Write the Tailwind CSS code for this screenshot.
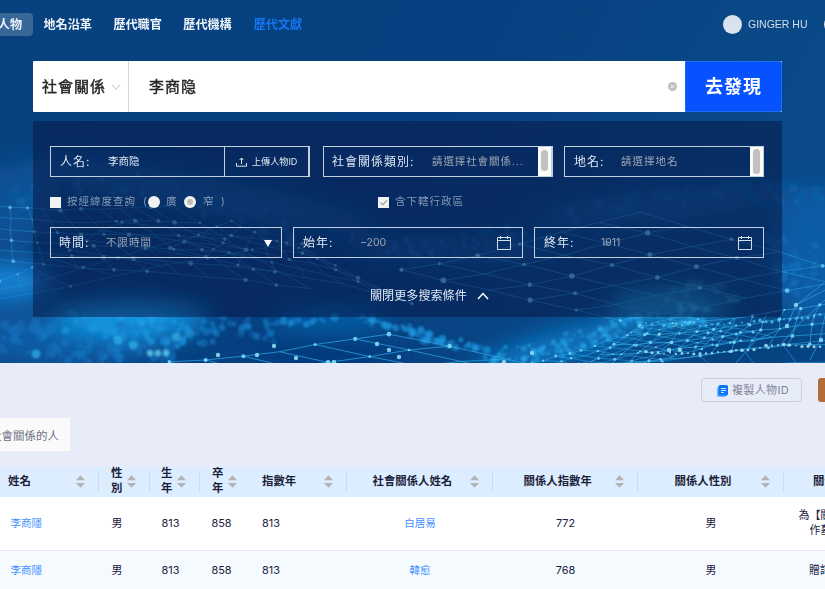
<!DOCTYPE html>
<html lang="zh-Hant">
<head>
    <meta charset="UTF-8">
    <meta name="viewport" content="width=device-width, initial-scale=1.0">
    <title>社會關係查詢</title>
    <script src="https://cdn.jsdelivr.net/npm/@tailwindcss/browser@4"></script>
    <style>
        body {
            font-family: 'Inter', 'Noto Sans CJK TC', 'Noto Sans CJK SC', sans-serif;
        }
    </style>
</head>
<body class="w-[825px] h-[589px] overflow-hidden bg-[#e8ecf8] text-[#22223f] whitespace-nowrap">

    <!-- Hero -->
    <section class="relative h-[363px] overflow-hidden bg-[#07427f]">
        <svg id="hero-bg" class="absolute inset-0" width="825" height="363" viewBox="0 0 825 363">
            <defs>
                <linearGradient id="base" x1="0" y1="0" x2="1" y2="0.25">
                    <stop offset="0" stop-color="#07427f"/>
                    <stop offset="0.55" stop-color="#074080"/>
                    <stop offset="1" stop-color="#0a4a88"/>
                </linearGradient>
                <filter id="soft" x="-50%" y="-50%" width="200%" height="200%"><feGaussianBlur stdDeviation="12"/></filter>
                <filter id="fine" x="-50%" y="-50%" width="200%" height="200%"><feGaussianBlur stdDeviation="0.9"/></filter>
            </defs>
            <rect width="825" height="363" fill="url(#base)"/>
            <g filter="url(#soft)">
                <ellipse cx="5" cy="282" rx="48" ry="20" fill="#1283d6"/>
                <ellipse cx="10" cy="205" rx="50" ry="40" fill="#0b559b" opacity="0.8"/>
                <ellipse cx="60" cy="340" rx="110" ry="26" fill="#0c62ae" opacity="0.8"/>
                <ellipse cx="130" cy="318" rx="80" ry="16" fill="#14a0ee"/>
                <ellipse cx="330" cy="318" rx="60" ry="7" fill="#1184d4" opacity="0.8"/>
                <ellipse cx="560" cy="345" rx="90" ry="12" transform="rotate(-16 560 345)" fill="#1080cf"/>
                <ellipse cx="670" cy="306" rx="60" ry="12" fill="#1da4e0"/>
                <ellipse cx="815" cy="255" rx="45" ry="70" fill="#0c5ca6"/>
                <ellipse cx="660" cy="205" rx="130" ry="16" transform="rotate(-6 660 205)" fill="#0d5fa6" opacity="0.7"/>
                <ellipse cx="200" cy="195" rx="180" ry="18" transform="rotate(10 200 195)" fill="#0d62a8" opacity="0.7"/>
                <ellipse cx="450" cy="250" rx="110" ry="14" fill="#0d62a8" opacity="0.6"/>
                <ellipse cx="330" cy="355" rx="70" ry="14" fill="#08387a" opacity="0.8"/>
                <ellipse cx="750" cy="350" rx="80" ry="10" fill="#073a78" opacity="0.9"/>
            </g>
            <g id="bokeh" filter="url(#fine)"></g>
            <g id="mesh" stroke="#2fa8e8" stroke-width="0.9" fill="none"></g>
            <g id="nodes"></g>
        </svg>

        <div class="relative">
            <nav class="flex items-center h-[61px] pb-3 text-[12.1px] font-bold text-[#eef4fb]">
                <span class="w-[33px] h-[23px] rounded-r bg-white/20 flex items-center justify-end pr-[11px] pt-[2px]">人物</span>
                <span class="ml-[10.500px] pt-[2px]">地名沿革</span>
                <span class="ml-[21.500px] pt-[2px]">歷代職官</span>
                <span class="ml-[21.500px] pt-[2px]">歷代機構</span>
                <span class="ml-[22px] pt-[2px] text-[#1677f2]">歷代文獻</span>
                <span class="ml-auto w-[19px] h-[19px] rounded-full bg-[#dae2ed]"></span>
                <span class="ml-[6px] font-['Liberation_Sans'] font-normal text-[10.5px] w-[59px] text-[#d3dfec]">GINGER HU</span>
                <span class="ml-[17px] -mr-[18px] w-[19px] h-[19px] rounded-full bg-[#dae2ed]"></span>
            </nav>

            <!-- Search bar -->
            <div class="flex ml-[33px] w-[749px] h-[51px] bg-white rounded-[1px] text-[#252525]">
                <div class="w-[96px] border-r border-[#d9d9d9] flex items-center pl-[9px] pt-px text-[15px] tracking-[1px] [-webkit-text-stroke:0.4px_#252525]">
                    社會關係
                    <svg class="ml-[5px]" width="10" height="8" viewBox="0 0 10 8" fill="none" stroke="#c4c4c4"><path d="M1 1.500 5 6.500 9 1.500"/></svg>
                </div>
                <div class="flex-1 flex items-center pl-5 pr-2 pt-px text-[15px] tracking-[1px] [-webkit-text-stroke:0.4px_#252525]">
                    李商隐
                    <svg class="ml-auto -mt-px" width="9" height="9" viewBox="0 0 9 9"><circle cx="4.500" cy="4.500" r="4.500" fill="#bfbfbf"/><path d="M3 3l3 3M6 3 3 6" stroke="#fff"/></svg>
                </div>
                <button class="w-[97px] bg-[#0652ff] border border-[#1a6cf0] rounded-r-[2px] text-white text-[18px] font-bold tracking-[1px]">去發現</button>
            </div>

            <!-- Advanced conditions -->
            <div class="ml-[33px] mt-[9px] w-[749px] h-[196px] bg-[#061442]/50 pt-[25px] px-[17px] text-[12px] text-[#dfe7f1]">
                <div class="flex h-[31px]">
                    <div class="w-[260px] border border-[#c5d0de] border-r-2 flex items-center pl-[9px]">
                        <span class="w-[48px] tracking-[1px]">人名:</span>
                        <span class="text-[10.5px] pt-px">李商隐</span>
                        <span class="ml-auto h-full w-[84px] border-l border-[#c5d0de] flex items-center pl-[11px] text-[9.1px]">
                            <svg class="mr-[5px]" width="11" height="10" viewBox="0 0 11 10" fill="none" stroke="#dfe7f1"><path d="M.5 6v3.200h10V6M5.500 7V1.200M3.600 3 5.500 1l1.900 2"/></svg>
                            上傳人物ID
                        </span>
                    </div>
                    <div class="ml-[13px] w-[230px] border border-[#c5d0de] border-r-2 flex items-center pl-[8px]">
                        <span class="w-[100px] tracking-[1px]">社會關係類別:</span>
                        <span class="text-[10.5px] tracking-[0.9px] text-[#9fa6b3]">請選擇社會關係...</span>
                        <span class="ml-auto w-[13px] h-full bg-[#fafafa] pt-[3px] pl-[3px]"><i class="block w-[7px] h-[21px] rounded-full bg-[#c1c1c1]"></i></span>
                    </div>
                    <div class="ml-[11px] w-[200px] border border-[#c5d0de] flex items-center pl-[9px]">
                        <span class="w-[47px] tracking-[1px]">地名:</span>
                        <span class="text-[10.5px] tracking-[1px] text-[#9fa6b3] pt-px">請選擇地名</span>
                        <span class="ml-auto w-[13px] h-full bg-[#fafafa] pt-[2px] pl-[3px]"><i class="block w-[7px] h-[25px] rounded-full bg-[#c1c1c1]"></i></span>
                    </div>
                </div>

                <div class="flex items-center h-[50px] text-[10.5px] tracking-[1px] text-[#8499b5]">
                    <span class="w-[11px] h-[11px] bg-[#f2f2f2]"></span>
                    <span class="ml-[6px] w-[76px]">按經緯度查詢</span>
                    <span class="w-[5px]">(</span>
                    <span class="w-[12px] h-[12px] rounded-full bg-[#f2f2f2]"></span>
                    <span class="ml-[6px] w-[18px]">廣</span>
                    <span class="w-[12px] h-[12px] rounded-full bg-[#f2f2f2] flex items-center justify-center"><i class="w-[6px] h-[6px] rounded-full bg-[#bdbdbd]"></i></span>
                    <span class="ml-[7px] w-[18px]">窄</span>
                    <span class="w-[5px]">)</span>
                    <svg class="ml-[152px] bg-[#f2f2f2]" width="11" height="11" viewBox="0 0 11 11" fill="none" stroke="#aaa" stroke-width="1.300"><path d="m2.500 5.500 2.300 2.300L9 3.300"/></svg>
                    <span class="ml-[6px]">含下轄行政區</span>
                </div>

                <div class="flex h-[31px]">
                    <div class="w-[232px] border border-[#c5d0de] flex items-center pl-2 pr-[9px]">
                        <span class="w-[47px] tracking-[1px]">時間:</span>
                        <span class="text-[10.5px] tracking-[1px] text-[#9fa6b3] pt-px">不限時間</span>
                        <svg class="ml-auto mt-px" width="8" height="7" viewBox="0 0 8 7" fill="#fff"><path d="M0 0h8L4 7z"/></svg>
                    </div>
                    <div class="ml-[11px] w-[230px] border border-[#c5d0de] flex items-center pl-[9px] pr-[11px]">
                        <span class="w-[57px] tracking-[1px]">始年:</span>
                        <span class="text-[10.5px] text-[#9fa6b3] pt-px">−200</span>
                        <svg class="ml-auto" width="14" height="14" viewBox="0 0 14 14" fill="none" stroke="#d5deea"><path d="M.5 1.500h13v12H.5zM.5 4.500h13M3.500 0v3M10.500 0v3"/></svg>
                    </div>
                    <div class="ml-[11px] w-[230px] border border-[#c5d0de] flex items-center pl-[9px] pr-[11px]">
                        <span class="w-[57px] tracking-[1px]">終年:</span>
                        <span class="text-[10.5px] text-[#9fa6b3] pt-px">1911</span>
                        <svg class="ml-auto" width="14" height="14" viewBox="0 0 14 14" fill="none" stroke="#d5deea"><path d="M.5 1.500h13v12H.5zM.5 4.500h13M3.500 0v3M10.500 0v3"/></svg>
                    </div>
                </div>

                <div class="flex items-center mt-[29px] pl-[320px] text-[12.1px]">
                    關閉更多搜索條件
                    <svg class="ml-[10px]" width="12" height="8" viewBox="0 0 12 8" fill="none" stroke="#fff" stroke-width="1.500"><path d="M1 7 6 1.500 11 7"/></svg>
                </div>
            </div>
        </div>
    </section>

    <!-- Result toolbar -->
    <div class="flex justify-end pt-[15px] h-[55px] text-[11px] text-[#7f8496]">
        <button class="w-[101px] h-[24px] border border-[#cdd1df] rounded-[3px] flex items-center pl-[15px] tracking-[0.35px]">
            <svg class="mr-[4px] mt-px" width="11" height="12" viewBox="0 0 11 12"><rect y="2" width="9" height="10" rx="1.500" fill="#6cb2ff"/><rect x="1.500" width="9.500" height="10.500" rx="1.500" fill="#0b78fb"/><path d="M4 3.500h5M4 5.500h5M4 7.500h3" stroke="#fff" stroke-width=".8"/></svg>
            複製人物ID
        </button>
        <span class="ml-[16px] w-[7px] h-[24px] rounded-l-[3px] bg-[#b16c38]"></span>
    </div>
    <div class="w-[71px] h-[34px] bg-[#fafafa] border-r border-b border-[#ededf0] flex items-center justify-end pr-[11px] pt-[4px] text-[11.5px] text-[#6c6f85]">社會關係的人</div>

    <!-- Table -->
    <div class="mt-[15px] h-[30px] bg-[#dcedff] grid grid-cols-[99px_51px_50px_147px_146px_145px_146px_60px] items-center text-[11.4px] leading-[15px] font-bold text-[#1c1d38] pb-[2px]">
        <div class="flex items-center h-[19px] border-r border-[#c9daee] pl-2 pr-[13px]">姓名<svg class="ml-auto" width="9" height="13" viewBox="0 0 9 13" fill="#b3b3b3"><path d="M0 5.300h9L4.500.3zM0 7.900h9l-4.500 4.800z"/></svg></div>
        <div class="flex items-center h-[19px] border-r border-[#c9daee] pl-[12px]"><span class="w-[12px] whitespace-normal">性別</span><svg class="ml-[4px]" width="9" height="13" viewBox="0 0 9 13" fill="#b3b3b3"><path d="M0 5.300h9L4.500.3zM0 7.900h9l-4.500 4.800z"/></svg></div>
        <div class="flex items-center h-[19px] border-r border-[#c9daee] pl-[11px]"><span class="w-[12px] whitespace-normal">生年</span><svg class="ml-[4px]" width="9" height="13" viewBox="0 0 9 13" fill="#b3b3b3"><path d="M0 5.300h9L4.500.3zM0 7.900h9l-4.500 4.800z"/></svg></div>
        <div class="flex items-center h-[19px] border-r border-[#c9daee] pr-[13px]"><span class="ml-[12px] w-[12px] whitespace-normal">卒年</span><svg class="ml-[4px]" width="9" height="13" viewBox="0 0 9 13" fill="#b3b3b3"><path d="M0 5.300h9L4.500.3zM0 7.900h9l-4.500 4.800z"/></svg><span class="ml-[25px]">指數年</span><svg class="ml-auto" width="9" height="13" viewBox="0 0 9 13" fill="#b3b3b3"><path d="M0 5.300h9L4.500.3zM0 7.900h9l-4.500 4.800z"/></svg></div>
        <div class="flex items-center h-[19px] border-r border-[#c9daee] pr-[13px]"><span class="ml-[25.500px]">社會關係人姓名</span><svg class="ml-auto" width="9" height="13" viewBox="0 0 9 13" fill="#b3b3b3"><path d="M0 5.300h9L4.500.3zM0 7.900h9l-4.500 4.800z"/></svg></div>
        <div class="flex items-center h-[19px] border-r border-[#c9daee] pr-[13px]"><span class="ml-[30.500px]">關係人指數年</span><svg class="ml-auto" width="9" height="13" viewBox="0 0 9 13" fill="#b3b3b3"><path d="M0 5.300h9L4.500.3zM0 7.900h9l-4.500 4.800z"/></svg></div>
        <div class="flex items-center h-[19px] border-r border-[#c9daee] pr-[13px]"><span class="ml-[36.500px]">關係人性別</span><svg class="ml-auto" width="9" height="13" viewBox="0 0 9 13" fill="#b3b3b3"><path d="M0 5.300h9L4.500.3zM0 7.900h9l-4.500 4.800z"/></svg></div>
        <div class="pl-[29px]">關係</div>
    </div>
    <div class="h-[54px] bg-white border-b border-[#e4e8f5] grid grid-cols-[98px_51px_50px_50px_98px_146px_145px_146px_60px] items-center text-[10.9px] leading-[15px] pb-px">
        <div class="pl-[10.500px] text-[10.5px] text-[#3f92ff]">李商隱</div>
        <div class="pl-[13.500px]">男</div>
        <div class="pl-[12.500px]">813</div>
        <div class="pl-[12.500px]">858</div>
        <div class="pl-[13px]">813</div>
        <div class="text-center text-[10.5px] text-[#3f92ff]">白居易</div>
        <div class="text-center">772</div>
        <div class="text-center">男</div>
        <div class="pl-[14.500px]">為【關<br><span class="pl-[11px]">作墓誌</span></div>
    </div>
    <div class="h-[40px] bg-[#f5faff] grid grid-cols-[98px_51px_50px_50px_98px_146px_145px_146px_60px] items-center text-[10.9px] pb-px">
        <div class="pl-[10.500px] text-[10.5px] text-[#3f92ff]">李商隱</div>
        <div class="pl-[13.500px]">男</div>
        <div class="pl-[12.500px]">813</div>
        <div class="pl-[12.500px]">858</div>
        <div class="pl-[13px]">813</div>
        <div class="text-center text-[10.5px] text-[#3f92ff]">韓愈</div>
        <div class="text-center">768</div>
        <div class="text-center">男</div>
        <div class="pl-[25px]">贈詩文</div>
    </div>

    <script>
        const NS = 'http://www.w3.org/2000/svg';
        const bokeh = document.getElementById('bokeh');
        const mesh = document.getElementById('mesh');
        const nodes = document.getElementById('nodes');

        // Seeded random, so the backdrop is the same on every load
        let seed = 7;
        function rnd() {
            seed = (seed * 16807) % 2147483647;
            return seed / 2147483647;
        }

        function add(parent, tag, attrs) {
            const el = document.createElementNS(NS, tag);
            for (const k in attrs) el.setAttribute(k, attrs[k]);
            parent.appendChild(el);
        }

        function dot(parent, x, y, r, fill, opacity) {
            add(parent, 'circle', { cx: x, cy: y, r, fill, opacity });
        }

        // Blurred dots scattered along a polyline
        function scatter(points, count, spread, rMin, rMax, fill, alpha) {
            for (let i = 0; i < count; i++) {
                const t = rnd() * (points.length - 1);
                const k = Math.floor(t), f = t - k;
                const x = points[k][0] + (points[k + 1][0] - points[k][0]) * f;
                const y = points[k][1] + (points[k + 1][1] - points[k][1]) * f;
                dot(bokeh, x + (rnd() - 0.5) * spread, y + (rnd() - 0.5) * spread, rMin + rnd() * (rMax - rMin), fill, alpha * (0.4 + rnd() * 0.6));
            }
        }

        // Grid of lines between four corners, with bright nodes
        function net(a, b, c, d, cols, rows, alpha, size) {
            const grid = [];
            for (let j = 0; j <= rows; j++) {
                const row = [];
                for (let i = 0; i <= cols; i++) {
                    const u = i / cols, v = j / rows;
                    const x = (a[0] * (1 - u) + b[0] * u) * (1 - v) + (d[0] * (1 - u) + c[0] * u) * v;
                    const y = (a[1] * (1 - u) + b[1] * u) * (1 - v) + (d[1] * (1 - u) + c[1] * u) * v + Math.sin(u * 5 + v) * 3;
                    row.push([x + (rnd() - 0.5) * 5, y + (rnd() - 0.5) * 2]);
                }
                grid.push(row);
            }
            let path = '';
            grid.forEach((row) => { path += 'M' + row.join('L'); });
            for (let i = 0; i <= cols; i++) path += 'M' + grid.map((row) => row[i]).join('L');
            add(mesh, 'path', { d: path, opacity: alpha });
            grid.flat().forEach(([x, y]) => {
                if (rnd() > 0.4) dot(nodes, x, y, size * (0.6 + rnd() * 0.6), '#6fcdf0', Math.min(1, alpha * 1.5));
            });
        }

        scatter([[0, 335], [80, 345], [170, 340]], 90, 38, 2, 6, '#1679c4', 0.55);
        scatter([[60, 322], [130, 330], [190, 335]], 40, 26, 2, 5, '#1e9ce4', 0.6);
        scatter([[280, 322], [350, 318], [400, 326], [440, 342], [490, 348]], 75, 9, 1.5, 4, '#1f9be4', 0.75);
        scatter([[490, 360], [540, 352], [590, 338], [625, 326], [680, 314], [700, 317]], 170, 20, 1.2, 3.2, '#27a8ea', 0.75);
        scatter([[190, 340], [230, 325], [290, 335]], 40, 24, 2, 4, '#1783cf', 0.6);
        scatter([[560, 218], [640, 200], [720, 190], [825, 195]], 60, 20, 2, 6, '#0f65ac', 0.5);
        scatter([[0, 200], [60, 195], [140, 185], [240, 215], [330, 240]], 60, 22, 2, 5, '#1269ae', 0.5);
        scatter([[350, 245], [430, 250], [520, 235]], 40, 20, 2, 4, '#1273b8', 0.5);
        scatter([[670, 300], [700, 280], [735, 300]], 35, 12, 2, 4, '#2c98c8', 0.4);
        scatter([[780, 240], [790, 285], [825, 250]], 40, 30, 2, 5, '#1478c4', 0.45);
        [[118, 340], [36, 354], [176, 337], [133, 345]].forEach(([x, y]) => dot(bokeh, x, y, 4.5, '#31b4ea', 0.7));
        [[150, 353], [158, 353], [166, 353]].forEach(([x, y]) => dot(bokeh, x, y, 3.2, '#5cc8e8', 0.85));

        // Left mesh, running under the time field
        net([-10, 205], [170, 210], [310, 290], [-20, 255], 10, 5, 0.42, 2);
        net([0, 280], [120, 225], [300, 245], [-20, 300], 7, 2, 0.35, 1.8);
        net([230, 220], [310, 255], [410, 305], [170, 245], 7, 4, 0.42, 2);
        // Wide diamonds on the right
        net([400, 270], [640, 215], [870, 280], [620, 318], 6, 5, 0.55, 2.4);
        // Foreground meshes along the bottom edge
        net([170, 362], [390, 338], [620, 385], [330, 400], 6, 4, 0.8, 2);
        net([640, 325], [850, 305], [850, 345], [590, 362], 13, 4, 0.75, 1.6);
        net([520, 365], [680, 318], [770, 338], [590, 372], 13, 5, 0.6, 1.3);
        net([580, 364], [825, 344], [850, 385], [600, 385], 6, 2, 0.6, 1.5);
        // Steep strands rising at the right edge
        add(mesh, 'path', { d: 'M736 363 756 340 787 326 796 305 824 283M780 345 798 325 825 300M810 360 820 340 825 315M796 305 825 290M700 350 720 330 735 318', opacity: 0.75 });

        // Bright strings of nodes
        for (let x = 640; x < 825; x += 6) {
            dot(nodes, x, 322 - (x > 740 ? (x - 740) * 0.1 : 0) + rnd() * 4, 0.8 + rnd(), '#4fc3f0', 0.8);
            dot(nodes, x, 350 + Math.sin((x - 640) / 30) * 3 - (x > 760 ? 3 : 0) + rnd() * 2, 0.8 + rnd() * 1.1, '#a8e4f4', 0.85);
        }
        [[796, 305], [787, 326], [821, 340], [669, 350], [680, 350], [532, 353], [504, 362], [218, 355], [257, 355], [296, 358], [334, 362], [274, 346], [377, 344], [389, 350], [399, 357]].forEach(([x, y]) => dot(nodes, x, y, 2.2, '#8adcf4', 0.9));
    </script>
</body>
</html>
